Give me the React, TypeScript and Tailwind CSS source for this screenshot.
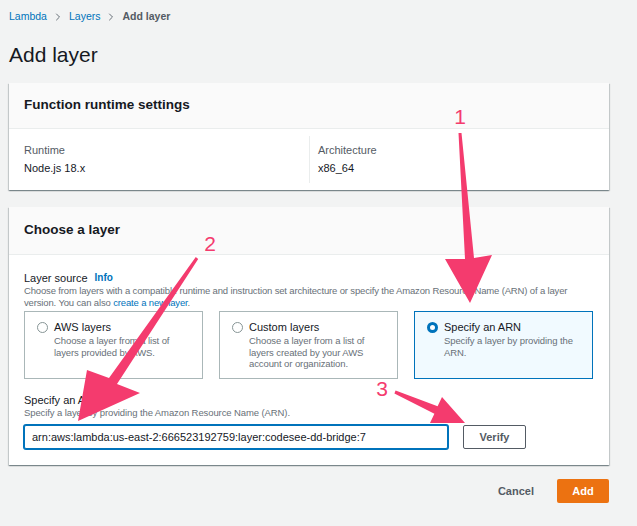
import React from "react";
import { ChevronRight } from "lucide-react";

const Radio = ({ checked }: { checked?: boolean }) =>
  checked ? (
    <span className="mt-[1px] block h-[11px] w-[11px] shrink-0 rounded-full border-[3.5px] border-[#0073bb] bg-white" />
  ) : (
    <span className="mt-[1px] block h-[11px] w-[11px] shrink-0 rounded-full border border-[#879596] bg-white" />
  );

const SourceCard = ({
  title,
  desc,
  checked,
}: {
  title: string;
  desc: string;
  checked?: boolean;
}) => (
  <div
    className={
      checked
        ? "flex h-[68px] w-[179px] gap-[6px] border border-[#0073bb] bg-[#f1faff] pl-[12px] pr-[8px] pt-[9px]"
        : "flex h-[68px] w-[179px] gap-[6px] border border-[#aab7b8] bg-white pl-[12px] pr-[8px] pt-[9px]"
    }
  >
    <Radio checked={checked} />
    <div>
      <div className="text-[11px] leading-[13px] text-[#16191f]">{title}</div>
      <div className="mt-[1px] text-[9.5px] leading-[11.7px] tracking-[-0.1px] text-[#687078]">{desc}</div>
    </div>
  </div>
);

const Arrows = () => (
  <svg className="pointer-events-none absolute left-0 top-0" width="637" height="526">
    <g fill="#f43b6e">
      <polygon points="458.5,133 461.5,133 474,258 492,255 470,303 445,259 465,259" />
      <polygon points="195.8,257.1 198.2,258.9 117,384 140,393 78,421 87,370 109,378" />
      <polygon points="395.6,390.6 394.4,393.4 434.4,413.7 430,423 465,423 442,397 437.6,406.3" />
    </g>
    <g fill="#f43b6e" fontFamily="Liberation Sans, Arial, sans-serif" fontSize="21" textAnchor="middle">
      <text x="460" y="124">1</text>
      <text x="210" y="251">2</text>
      <text x="382" y="396">3</text>
    </g>
  </svg>
);

export default function App() {
  return (
    <div className="relative h-[526px] w-[637px] overflow-hidden bg-[#f2f3f3] px-[9px] font-['Liberation_Sans',Arial,sans-serif]">
      <div className="flex h-[34px] items-center gap-[5px] text-[10.5px]">
        <span className="text-[#0073bb]">Lambda</span>
        <ChevronRight size={12} color="#687078" strokeWidth={2} />
        <span className="text-[#0073bb]">Layers</span>
        <ChevronRight size={12} color="#687078" strokeWidth={2} />
        <span className="font-bold text-[#545b64]">Add layer</span>
      </div>
      <div className="flex h-[42px] items-center text-[21px] text-[#16191f]">Add layer</div>

      <div className="mt-[7px] w-[600px] bg-white shadow-[0_1px_1px_0_rgba(0,28,36,0.3),1px_1px_1px_0_rgba(0,28,36,0.15),-1px_1px_1px_0_rgba(0,28,36,0.15)]">
        <div className="flex h-[46px] items-center border-b border-[#eaeded] bg-[#fafafa] px-[15px] text-[13.5px] font-bold text-[#16191f]">
          Function runtime settings
        </div>
        <div className="flex h-[61px] items-center">
          <div className="w-[300px] self-stretch py-[8px] pl-[15px]">
            <div className="flex h-full flex-col justify-center gap-[5px]">
              <div className="text-[11px] leading-[13px] text-[#545b64]">Runtime</div>
              <div className="text-[11px] leading-[13px] text-[#16191f]">Node.js 18.x</div>
            </div>
          </div>
          <div className="my-[7px] flex flex-col justify-center gap-[5px] self-stretch border-l border-[#eaeded] pl-[8px]">
            <div className="text-[11px] leading-[13px] text-[#545b64]">Architecture</div>
            <div className="text-[11px] leading-[13px] text-[#16191f]">x86_64</div>
          </div>
        </div>
      </div>

      <div className="mt-[17px] w-[600px] bg-white shadow-[0_1px_1px_0_rgba(0,28,36,0.3),1px_1px_1px_0_rgba(0,28,36,0.15),-1px_1px_1px_0_rgba(0,28,36,0.15)]">
        <div className="flex h-[48px] items-center border-b border-[#eaeded] bg-[#fafafa] px-[15px] text-[13.5px] font-bold text-[#16191f]">
          Choose a layer
        </div>
        <div className="px-[15px] pb-[16px] pt-[16px]">
          <div className="flex items-center gap-[7px] text-[11px] leading-[14px] text-[#16191f]">
            Layer source
            <span className="text-[10px] font-bold text-[#0073bb]">Info</span>
          </div>
          <div className="w-[572px] text-[9.5px] leading-[11.5px] tracking-[-0.15px] text-[#687078]">
            Choose from layers with a compatible runtime and instruction set architecture or specify the Amazon Resource Name (ARN) of a layer version. You can also{" "}
            <span className="text-[#0073bb]">create a new layer</span>.
          </div>
          <div className="mt-[3px] flex gap-[16px]">
            <SourceCard title="AWS layers" desc="Choose a layer from a list of layers provided by AWS." />
            <SourceCard title="Custom layers" desc="Choose a layer from a list of layers created by your AWS account or organization." />
            <SourceCard checked title="Specify an ARN" desc="Specify a layer by providing the ARN." />
          </div>
          <div className="mt-[14px] text-[11px] leading-[14px] text-[#16191f]">Specify an ARN</div>
          <div className="text-[9.5px] leading-[12px] tracking-[-0.1px] text-[#687078]">
            Specify a layer by providing the Amazon Resource Name (ARN).
          </div>
          <div className="mt-[6px] flex items-center gap-[15px]">
            <div className="flex h-[24px] w-[424px] items-center rounded-[2px] border border-[#0073bb] bg-white px-[7px] text-[11px] text-[#16191f] shadow-[0_0_0_1px_#0073bb]">
              arn:aws:lambda:us-east-2:666523192759:layer:codesee-dd-bridge:7
            </div>
            <div className="flex h-[24px] w-[63px] items-center justify-center rounded-[2px] border border-[#545b64] bg-white text-[11px] font-bold text-[#545b64]">
              Verify
            </div>
          </div>
        </div>
      </div>

      <div className="mt-[14px] flex w-[600px] items-center justify-end gap-[23px]">
        <span className="text-[11px] font-bold text-[#545b64]">Cancel</span>
        <div className="flex h-[24px] w-[52px] items-center justify-center rounded-[2px] bg-[#ec7211] text-[11px] font-bold text-white">
          Add
        </div>
      </div>

      <Arrows />
    </div>
  );
}
